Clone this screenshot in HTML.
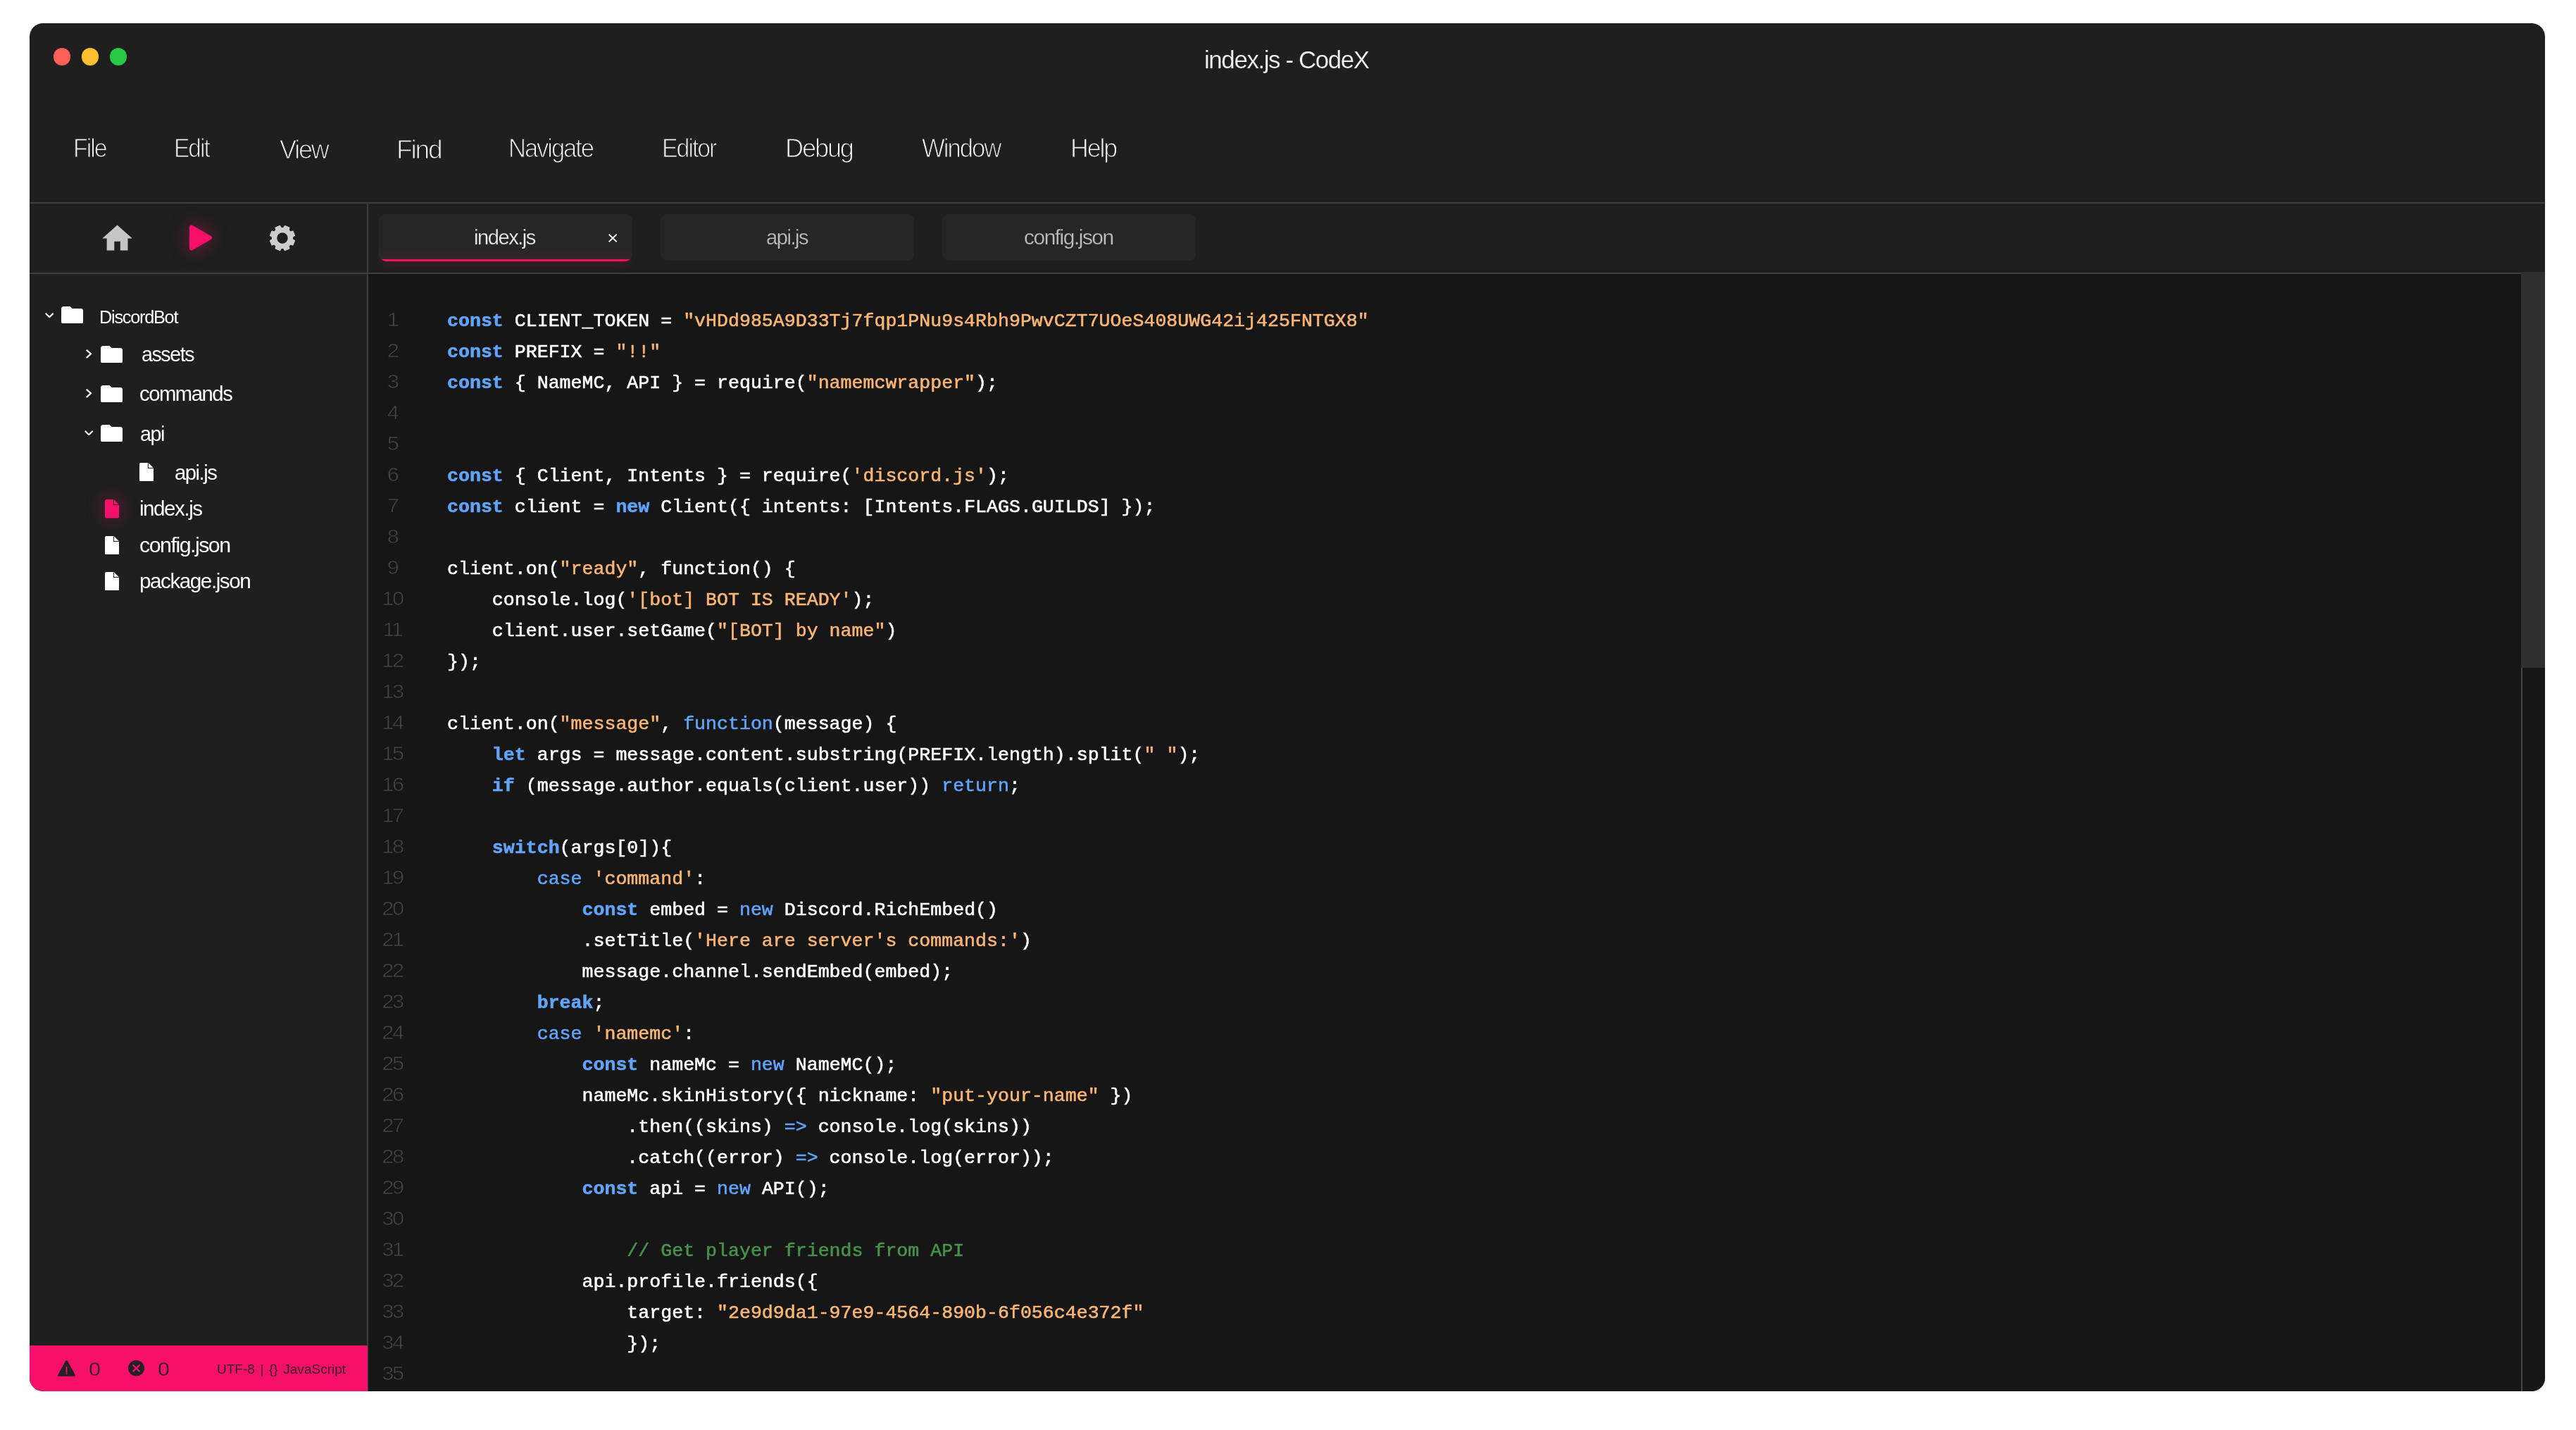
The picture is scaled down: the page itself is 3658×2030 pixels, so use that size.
<!DOCTYPE html>
<html><head><meta charset="utf-8"><title>index.js - CodeX</title>
<style>
*{box-sizing:border-box;margin:0;padding:0}
html,body{width:3658px;height:2030px;background:#fff;overflow:hidden}
body{font-family:"Liberation Sans",sans-serif;position:relative}
.win{position:absolute;left:42px;top:33px;width:3572px;height:1942px;background:#1f1f1f;border-radius:19px;overflow:hidden;will-change:transform}
.in{position:absolute;left:-42px;top:-33px;width:3658px;height:2030px}
.abs{position:absolute}
.ic{position:absolute;display:block}
.dot{position:absolute;width:24.6px;height:24.6px;border-radius:50%;top:68.3px}
.hl{position:absolute;left:42px;width:3572px;height:2px;background:#3e3e3e}
/* text positioned by baseline: element top = baseline; inner span shifted up */
.t{position:absolute;line-height:1;margin-top:-0.8465em;white-space:nowrap;color:#fff;transform-origin:0 0}
.menu{color:#f2f2f2;letter-spacing:-0.06em;-webkit-text-stroke:1.1px #1f1f1f}
.title{color:#f0f0f0;letter-spacing:-0.04em;-webkit-text-stroke:.2px #1f1f1f}
.tree{letter-spacing:-0.05em}
.tab{position:absolute;top:304.3px;width:360px;height:66px;border-radius:9px;background:#262626}
.tab.act{overflow:hidden;height:66.5px;background:linear-gradient(to top,rgba(245,16,106,.085),rgba(245,16,106,0) 17px),#262626}
.tab.act i{position:absolute;left:4px;right:4px;bottom:0;height:2.8px;border-radius:0 0 8px 8px/0 0 3px 3px;background:#f5106a}
.tglow{position:absolute;left:548px;top:367px;width:340px;height:3px;border-radius:2px;box-shadow:0 0 15px 5px rgba(245,16,106,.16)}
.tabt{letter-spacing:-0.05em;-webkit-text-stroke:.25px #262626}
.code{position:absolute;left:523px;top:389px;width:3057px;height:1587px;background:#161616}
.cl{position:absolute;left:635px;height:44px;line-height:44px;white-space:pre;font-family:"Liberation Mono",monospace;font-size:26.6px;color:#fff;-webkit-text-stroke:.55px}
.k{color:#62a4fb;font-weight:bold}
.b{color:#62a4fb}
.s{color:#fbb676}
.c{color:#47934b}
.n{position:absolute;left:506.9px;width:100px;text-align:center;height:44px;line-height:44px;margin-top:-3px;font-size:28.5px;color:#454545;letter-spacing:-0.08em;-webkit-text-stroke:.7px #161616;transform:scaleX(1.08)}
.status{position:absolute;left:42px;top:1910px;width:480px;height:65px;background:#f5106a}
.st0{color:#222;letter-spacing:0;-webkit-text-stroke:.4px #f5106a}
.st1{color:#222;letter-spacing:0;-webkit-text-stroke:.15px #f5106a;word-spacing:.12em}
</style></head><body>
<div class="win"><div class="in">
<div class="dot" style="left:75.7px;background:#ff5f57"></div>
<div class="dot" style="left:115.7px;background:#ffc02f"></div>
<div class="dot" style="left:155.7px;background:#28c942"></div>
<div class="t title" style="left:1709.67px;top:97.0px;font-size:34.5px;transform:scaleX(1.0116);">index.js - CodeX</div>
<div class="t menu" style="left:103.7px;top:223.6px;font-size:36px;transform:scaleX(0.9421);">File</div>
<div class="t menu" style="left:247.04px;top:223.6px;font-size:36px;transform:scaleX(0.9307);">Edit</div>
<div class="t menu" style="left:396.5px;top:225.0px;font-size:36px;transform:scaleX(0.9993);">View</div>
<div class="t menu" style="left:562.78px;top:225.0px;font-size:36px;transform:scaleX(1.0333);">Find</div>
<div class="t menu" style="left:722.24px;top:223.6px;font-size:36px;transform:scaleX(0.9608);">Navigate</div>
<div class="t menu" style="left:940.11px;top:223.6px;font-size:36px;transform:scaleX(0.9414);">Editor</div>
<div class="t menu" style="left:1115.08px;top:223.6px;font-size:36px;transform:scaleX(1.0055);">Debug</div>
<div class="t menu" style="left:1309.33px;top:223.6px;font-size:36px;transform:scaleX(0.968);">Window</div>
<div class="t menu" style="left:1519.92px;top:223.6px;font-size:36px;transform:scaleX(0.9952);">Help</div>
<div class="hl" style="top:286.6px"></div>
<div class="hl" style="top:386.6px"></div>
<div class="abs" style="left:521px;top:288px;width:2px;height:1688px;background:#3e3e3e"></div>

<!-- toolbar icons -->
<svg class="ic" style="left:140.6px;top:313.1px" width="51.1" height="51.1" viewBox="0 0 24 24"><path fill="#c6c6c6" d="M10 20v-6h4v6h5v-8h3L12 3 2 12h3v8z"/></svg>
<svg class="ic" style="left:269px;top:319px;overflow:visible;filter:drop-shadow(0 0 12px rgba(245,16,106,.5))" width="32" height="37" viewBox="0 0 32 37"><path fill="#f5106a" stroke="#f5106a" stroke-width="6" stroke-linejoin="round" d="M3 3.6L29 18.5L3 33.4Z"/></svg>
<svg class="ic" style="left:381px;top:317.5px" width="40" height="40" viewBox="0 0 40 40"><path fill="#cdcdcd" stroke="#cdcdcd" stroke-width="1.8" stroke-linejoin="round" fill-rule="evenodd" d="M21.87 5.82 L23.66 2.78 L29.59 5.24 L28.71 8.66 L31.34 11.29 L34.76 10.41 L37.22 16.34 L34.18 18.13 L34.18 21.87 L37.22 23.66 L34.76 29.59 L31.34 28.71 L28.71 31.34 L29.59 34.76 L23.66 37.22 L21.87 34.18 L18.13 34.18 L16.34 37.22 L10.41 34.76 L11.29 31.34 L8.66 28.71 L5.24 29.59 L2.78 23.66 L5.82 21.87 L5.82 18.13 L2.78 16.34 L5.24 10.41 L8.66 11.29 L11.29 8.66 L10.41 5.24 L16.34 2.78 L18.13 5.82Z M12.30 20.00 a7.7 7.7 0 1 0 15.4 0 a7.7 7.7 0 1 0 -15.4 0Z"/><circle cx="20" cy="20" r="7.7" fill="#1f1f1f"/></svg>

<!-- tree -->
<svg class="ic" style="left:63.7px;top:443.6px" width="12.4" height="7.8" viewBox="6 8.59 12 7.41" preserveAspectRatio="none"><path fill="#fff" d="M16.59 8.59L12 13.17 7.41 8.59 6 10l6 6 6-6z"/></svg>
<svg class="ic" style="left:86.6px;top:434.5px" width="31.2" height="24.8" viewBox="2 4 20 16" preserveAspectRatio="none"><path fill="#fff" d="M10 4H4c-1.1 0-1.99.9-1.99 2L2 18c0 1.1.9 2 2 2h16c1.1 0 2-.9 2-2V8c0-1.1-.9-2-2-2h-8l-2-2z"/></svg>
<div class="t tree" style="left:140.75px;top:459.0px;font-size:26px;transform:scaleX(0.974);">DiscordBot</div>
<svg class="ic" style="left:122.2px;top:496.2px" width="8.6" height="12.7" viewBox="8.59 6 7.41 12" preserveAspectRatio="none"><path fill="#fff" d="M10 6L8.59 7.41 13.17 12l-4.58 4.59L10 18l6-6z"/></svg>
<svg class="ic" style="left:143.0px;top:490.6px" width="31.2" height="24.8" viewBox="2 4 20 16" preserveAspectRatio="none"><path fill="#fff" d="M10 4H4c-1.1 0-1.99.9-1.99 2L2 18c0 1.1.9 2 2 2h16c1.1 0 2-.9 2-2V8c0-1.1-.9-2-2-2h-8l-2-2z"/></svg>
<div class="t tree" style="left:200.69px;top:513.5px;font-size:29.6px;transform:scaleX(0.9663);">assets</div>
<svg class="ic" style="left:122.4px;top:552.2px" width="8.6" height="12.7" viewBox="8.59 6 7.41 12" preserveAspectRatio="none"><path fill="#fff" d="M10 6L8.59 7.41 13.17 12l-4.58 4.59L10 18l6-6z"/></svg>
<svg class="ic" style="left:143.3px;top:546.5px" width="31.2" height="24.8" viewBox="2 4 20 16" preserveAspectRatio="none"><path fill="#fff" d="M10 4H4c-1.1 0-1.99.9-1.99 2L2 18c0 1.1.9 2 2 2h16c1.1 0 2-.9 2-2V8c0-1.1-.9-2-2-2h-8l-2-2z"/></svg>
<div class="t tree" style="left:198.27px;top:569.3px;font-size:29.6px;transform:scaleX(0.9879);">commands</div>
<svg class="ic" style="left:120.3px;top:610.6px" width="12.4" height="7.8" viewBox="6 8.59 12 7.41" preserveAspectRatio="none"><path fill="#fff" d="M16.59 8.59L12 13.17 7.41 8.59 6 10l6 6 6-6z"/></svg>
<svg class="ic" style="left:143.2px;top:602.6px" width="31.2" height="24.8" viewBox="2 4 20 16" preserveAspectRatio="none"><path fill="#fff" d="M10 4H4c-1.1 0-1.99.9-1.99 2L2 18c0 1.1.9 2 2 2h16c1.1 0 2-.9 2-2V8c0-1.1-.9-2-2-2h-8l-2-2z"/></svg>
<div class="t tree" style="left:198.59px;top:625.7px;font-size:29.6px;transform:scaleX(0.9684);">api</div>
<svg class="ic" style="left:198.1px;top:657px;" width="20.1" height="26.4" viewBox="0 0 20 27" preserveAspectRatio="none"><path fill="#fff" d="M2 0H12.6L20 7.4V25a2 2 0 0 1-2 2H2a2 2 0 0 1-2-2V2a2 2 0 0 1 2-2z"/><path fill="none" stroke="#1f1f1f" stroke-width="1" d="M12.3 0.3V7.7H19.7"/></svg>
<div class="t tree" style="left:247.57px;top:681.3px;font-size:29.6px;transform:scaleX(0.9873);">api.js</div>
<svg class="ic" style="left:148.9px;top:709.3px;filter:drop-shadow(0 0 13px rgba(245,16,106,.45));overflow:visible;" width="20.1" height="26.4" viewBox="0 0 20 27" preserveAspectRatio="none"><path fill="#f5106a" d="M2 0H12.6L20 7.4V25a2 2 0 0 1-2 2H2a2 2 0 0 1-2-2V2a2 2 0 0 1 2-2z"/><path fill="none" stroke="#1f1f1f" stroke-width="1" d="M12.3 0.3V7.7H19.7"/></svg>
<div class="t tree" style="left:197.5px;top:732.3px;font-size:29.6px;transform:scaleX(1.0011);">index.js</div>
<svg class="ic" style="left:148.9px;top:760.6px;" width="20.1" height="26.4" viewBox="0 0 20 27" preserveAspectRatio="none"><path fill="#fff" d="M2 0H12.6L20 7.4V25a2 2 0 0 1-2 2H2a2 2 0 0 1-2-2V2a2 2 0 0 1 2-2z"/><path fill="none" stroke="#1f1f1f" stroke-width="1" d="M12.3 0.3V7.7H19.7"/></svg>
<div class="t tree" style="left:198.22px;top:783.8px;font-size:29.6px;transform:scaleX(1.0275);">config.json</div>
<svg class="ic" style="left:148.9px;top:811.5px;" width="20.1" height="26.4" viewBox="0 0 20 27" preserveAspectRatio="none"><path fill="#fff" d="M2 0H12.6L20 7.4V25a2 2 0 0 1-2 2H2a2 2 0 0 1-2-2V2a2 2 0 0 1 2-2z"/><path fill="none" stroke="#1f1f1f" stroke-width="1" d="M12.3 0.3V7.7H19.7"/></svg>
<div class="t tree" style="left:198.09px;top:834.9px;font-size:29.6px;transform:scaleX(1.0036);">package.json</div>

<!-- status bar -->
<div class="status"></div>
<svg class="ic" style="left:81.8px;top:1931.1px" width="25" height="23" viewBox="0 0 25 23"><path fill="#222" stroke="#222" stroke-width="3.2" stroke-linejoin="round" d="M12.5 1.9L23.3 21.2H1.7z"/><path fill="#f5106a" d="M11.55 9.2h1.9v8.5h-1.9zM11.55 18.5h1.9v1.6h-1.9z"/></svg>
<div class="t st0" style="left:126.15px;top:1953.2px;font-size:28.2px;transform:scaleX(1.0792);">0</div>
<svg class="ic" style="left:182px;top:1931.2px" width="23" height="22.6" viewBox="2 2 20 20" preserveAspectRatio="none"><path fill="#222" d="M12 2C6.47 2 2 6.47 2 12s4.47 10 10 10 10-4.47 10-10S17.53 2 12 2zm5 13.59L15.59 17 12 13.41 8.41 17 7 15.59 10.59 12 7 8.41 8.41 7 12 10.59 15.59 7 17 8.41 13.41 12 17 15.59z"/></svg>
<div class="t st0" style="left:223.85px;top:1953.2px;font-size:28.2px;transform:scaleX(1.0792);">0</div>
<div class="t st1" style="left:307.96px;top:1950.9px;font-size:18.6px;transform:scaleX(1.0234);">UTF-8 | {} JavaScript</div>

<!-- tabs -->
<div class="tglow"></div>
<div class="tab act" style="left:538px"><i></i></div>
<div class="tab" style="left:938px"></div>
<div class="tab" style="left:1338px"></div>
<div class="t tabt" style="left:673.42px;top:347.5px;font-size:30px;transform:scaleX(0.9687);color:#ececec">index.js</div>
<svg class="ic" style="left:864px;top:331.7px" width="12.4" height="12" viewBox="0 0 12.4 12"><path stroke="#f0f0f0" stroke-width="1.9" fill="none" d="M.7.7L11.7 11.3M11.7.7L.7 11.3"/></svg>
<div class="t tabt" style="left:1087.55px;top:347.5px;font-size:30px;transform:scaleX(0.9674);color:#bdbdbd">api.js</div>
<div class="t tabt" style="left:1453.8px;top:347.5px;font-size:30px;transform:scaleX(0.998);color:#bdbdbd">config.json</div>

<!-- code -->
<div class="code"></div>
<div class="abs" style="left:3580px;top:389px;width:34px;height:1587px;background:#161616;border-left:2px solid #444"></div>
<div class="abs" style="left:3580px;top:386px;width:34px;height:562px;background:#303030"></div>
<div id="nums">
<div class="n" style="top:433.5px">1</div>
<div class="n" style="top:477.5px">2</div>
<div class="n" style="top:521.5px">3</div>
<div class="n" style="top:565.5px">4</div>
<div class="n" style="top:609.5px">5</div>
<div class="n" style="top:653.5px">6</div>
<div class="n" style="top:697.5px">7</div>
<div class="n" style="top:741.5px">8</div>
<div class="n" style="top:785.5px">9</div>
<div class="n" style="top:829.5px">10</div>
<div class="n" style="top:873.5px">11</div>
<div class="n" style="top:917.5px">12</div>
<div class="n" style="top:961.5px">13</div>
<div class="n" style="top:1005.5px">14</div>
<div class="n" style="top:1049.5px">15</div>
<div class="n" style="top:1093.5px">16</div>
<div class="n" style="top:1137.5px">17</div>
<div class="n" style="top:1181.5px">18</div>
<div class="n" style="top:1225.5px">19</div>
<div class="n" style="top:1269.5px">20</div>
<div class="n" style="top:1313.5px">21</div>
<div class="n" style="top:1357.5px">22</div>
<div class="n" style="top:1401.5px">23</div>
<div class="n" style="top:1445.5px">24</div>
<div class="n" style="top:1489.5px">25</div>
<div class="n" style="top:1533.5px">26</div>
<div class="n" style="top:1577.5px">27</div>
<div class="n" style="top:1621.5px">28</div>
<div class="n" style="top:1665.5px">29</div>
<div class="n" style="top:1709.5px">30</div>
<div class="n" style="top:1753.5px">31</div>
<div class="n" style="top:1797.5px">32</div>
<div class="n" style="top:1841.5px">33</div>
<div class="n" style="top:1885.5px">34</div>
<div class="n" style="top:1929.5px">35</div>
</div>
<div id="code">
<div class="cl" style="top:433.5px"><span class="k">const</span> CLIENT_TOKEN = <span class="s">"vHDd985A9D33Tj7fqp1PNu9s4Rbh9PwvCZT7UOeS408UWG42ij425FNTGX8"</span></div>
<div class="cl" style="top:477.5px"><span class="k">const</span> PREFIX = <span class="s">"!!"</span></div>
<div class="cl" style="top:521.5px"><span class="k">const</span> { NameMC, API } = require(<span class="s">"namemcwrapper"</span>);</div>
<div class="cl" style="top:565.5px"></div>
<div class="cl" style="top:609.5px"></div>
<div class="cl" style="top:653.5px"><span class="k">const</span> { Client, Intents } = require(<span class="s">'discord.js'</span>);</div>
<div class="cl" style="top:697.5px"><span class="k">const</span> client = <span class="k">new</span> Client({ intents: [Intents.FLAGS.GUILDS] });</div>
<div class="cl" style="top:741.5px"></div>
<div class="cl" style="top:785.5px">client.on(<span class="s">"ready"</span>, function() {</div>
<div class="cl" style="top:829.5px">    console.log(<span class="s">'[bot] BOT IS READY'</span>);</div>
<div class="cl" style="top:873.5px">    client.user.setGame(<span class="s">"[BOT] by name"</span>)</div>
<div class="cl" style="top:917.5px">});</div>
<div class="cl" style="top:961.5px"></div>
<div class="cl" style="top:1005.5px">client.on(<span class="s">"message"</span>, <span class="b">function</span>(message) {</div>
<div class="cl" style="top:1049.5px">    <span class="k">let</span> args = message.content.substring(PREFIX.length).split(<span class="s">" "</span>);</div>
<div class="cl" style="top:1093.5px">    <span class="k">if</span> (message.author.equals(client.user)) <span class="b">return</span>;</div>
<div class="cl" style="top:1137.5px"></div>
<div class="cl" style="top:1181.5px">    <span class="k">switch</span>(args[0]){</div>
<div class="cl" style="top:1225.5px">        <span class="b">case</span> <span class="s">'command'</span>:</div>
<div class="cl" style="top:1269.5px">            <span class="k">const</span> embed = <span class="b">new</span> Discord.RichEmbed()</div>
<div class="cl" style="top:1313.5px">            .setTitle(<span class="s">'Here are server's commands:'</span>)</div>
<div class="cl" style="top:1357.5px">            message.channel.sendEmbed(embed);</div>
<div class="cl" style="top:1401.5px">        <span class="k">break</span>;</div>
<div class="cl" style="top:1445.5px">        <span class="b">case</span> <span class="s">'namemc'</span>:</div>
<div class="cl" style="top:1489.5px">            <span class="k">const</span> nameMc = <span class="b">new</span> NameMC();</div>
<div class="cl" style="top:1533.5px">            nameMc.skinHistory({ nickname: <span class="s">"put-your-name"</span> })</div>
<div class="cl" style="top:1577.5px">                .then((skins) <span class="b">=&gt;</span> console.log(skins))</div>
<div class="cl" style="top:1621.5px">                .catch((error) <span class="b">=&gt;</span> console.log(error));</div>
<div class="cl" style="top:1665.5px">            <span class="k">const</span> api = <span class="b">new</span> API();</div>
<div class="cl" style="top:1709.5px"></div>
<div class="cl" style="top:1753.5px"><span class="c">                // Get player friends from API</span></div>
<div class="cl" style="top:1797.5px">            api.profile.friends({</div>
<div class="cl" style="top:1841.5px">                target: <span class="s">"2e9d9da1-97e9-4564-890b-6f056c4e372f"</span></div>
<div class="cl" style="top:1885.5px">                });</div>
<div class="cl" style="top:1929.5px"></div>
</div>
</div></div>
</body></html>
